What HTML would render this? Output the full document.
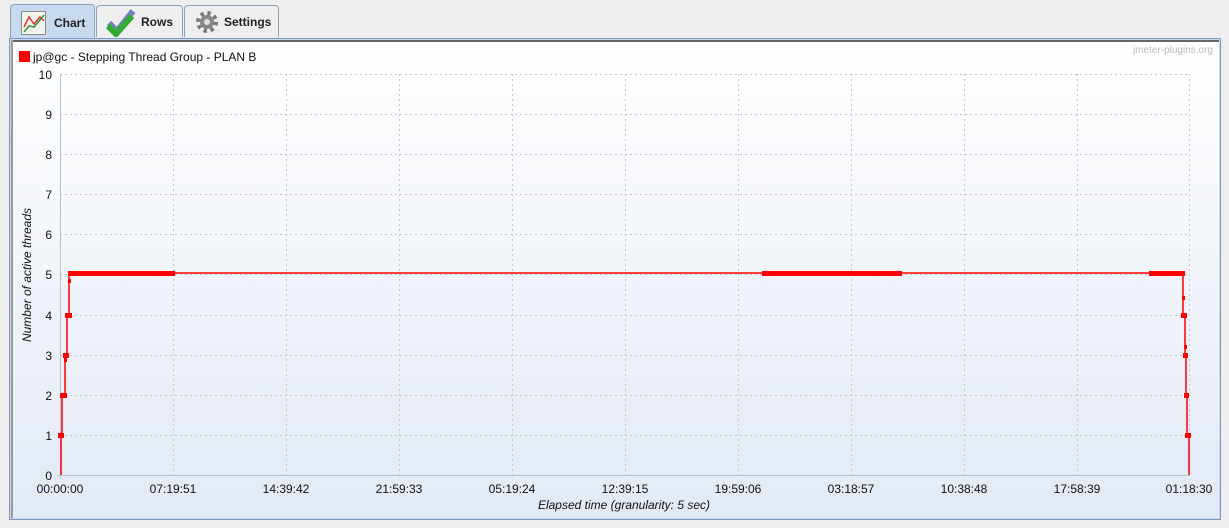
<!DOCTYPE html>
<html><head><style>
body{margin:0;width:1229px;height:528px;background:#eeeeee;font-family:"Liberation Sans",sans-serif;overflow:hidden;position:relative}
.tab{position:absolute;top:5px;height:32px;border:1px solid #8ea0bc;border-bottom:none;border-radius:4px 4px 0 0;background:#eeeeee;font-size:12px;font-weight:bold;color:#222;box-sizing:border-box}
.tab span{position:absolute;top:9px}
</style></head><body>
<div class="tab" style="left:10px;width:85px;top:4px;height:35px;background:#c8daf0"><span style="left:43px;top:11px">Chart</span>
<svg style="position:absolute;left:10px;top:6px" width="26" height="24"><rect x="0.5" y="0.5" width="24" height="23" fill="#f4f4ef" stroke="#888"/><polyline points="3,16 8,6 13,13 19,6 23,10" fill="none" stroke="#d33" stroke-width="1.5"/><polyline points="3,21 8,15 13,16 19,9 23,4" fill="none" stroke="#393" stroke-width="1.5"/></svg></div>
<div class="tab" style="left:96px;width:87px"><span style="left:44px">Rows</span>
<svg style="position:absolute;left:8px;top:1px" width="32" height="30"><path d="M4 16 L12 24 L28 4" fill="none" stroke="#7880c0" stroke-width="6"/><path d="M3 19 L11 27 L27 9" fill="none" stroke="#3a3" stroke-width="6"/></svg></div>
<div class="tab" style="left:184px;width:95px"><span style="left:39px">Settings</span>
<svg style="position:absolute;left:10px;top:4px" width="24" height="24"><circle cx="12" cy="12" r="8" fill="none" stroke="#777" stroke-width="6" stroke-dasharray="3 3.3"/><circle cx="12" cy="12" r="7" fill="#888"/><circle cx="12" cy="12" r="3" fill="#ddd"/></svg></div>
<div style="position:absolute;left:9px;top:38px;width:1212px;height:482px;border:1px solid #7c98c8;box-sizing:border-box;background:#ccd9ea"></div>
<svg style="position:absolute;left:11px;top:40px" width="1208" height="478">
<defs><linearGradient id="g" x1="0" y1="0" x2="0" y2="1"><stop offset="0" stop-color="#ffffff"/><stop offset="1" stop-color="#e3eaf5"/></linearGradient></defs>
<rect x="0" y="0" width="1208" height="478" fill="url(#g)"/>
<rect x="0" y="0" width="1208" height="2" fill="#666"/>
<rect x="0" y="0" width="2" height="478" fill="#999"/>
</svg>
<svg style="position:absolute;left:0;top:0" width="1229" height="528" font-family="Liberation Sans, sans-serif" font-size="12">
<text x="1213" y="53" text-anchor="end" font-size="10" fill="#bbb">jmeter-plugins.org</text>
<rect x="19" y="51" width="11" height="11" fill="#f00"/>
<text x="33" y="61" fill="#111">jp@gc - Stepping Thread Group - PLAN B</text>
<g stroke="#c4c8d0" stroke-dasharray="2 3" stroke-width="1">
<line x1="60" y1="74.5" x2="1190" y2="74.5"/><line x1="60" y1="114.5" x2="1190" y2="114.5"/><line x1="60" y1="154.5" x2="1190" y2="154.5"/><line x1="60" y1="194.5" x2="1190" y2="194.5"/><line x1="60" y1="234.5" x2="1190" y2="234.5"/><line x1="60" y1="274.5" x2="1190" y2="274.5"/><line x1="60" y1="315.5" x2="1190" y2="315.5"/><line x1="60" y1="355.5" x2="1190" y2="355.5"/><line x1="60" y1="395.5" x2="1190" y2="395.5"/><line x1="60" y1="435.5" x2="1190" y2="435.5"/>
<line x1="173.5" y1="74" x2="173.5" y2="475"/><line x1="286.5" y1="74" x2="286.5" y2="475"/><line x1="399.5" y1="74" x2="399.5" y2="475"/><line x1="512.5" y1="74" x2="512.5" y2="475"/><line x1="625.5" y1="74" x2="625.5" y2="475"/><line x1="738.5" y1="74" x2="738.5" y2="475"/><line x1="851.5" y1="74" x2="851.5" y2="475"/><line x1="964.5" y1="74" x2="964.5" y2="475"/><line x1="1077.5" y1="74" x2="1077.5" y2="475"/><line x1="1189.5" y1="74" x2="1189.5" y2="475"/>
</g>
<line x1="60.5" y1="74" x2="60.5" y2="478" stroke="#b8c0cc"/>
<line x1="57" y1="475.5" x2="1190" y2="475.5" stroke="#b8c0cc"/>
<g fill="#111" text-anchor="end">
<text x="52" y="79">10</text><text x="52" y="119">9</text><text x="52" y="159">8</text><text x="52" y="199">7</text><text x="52" y="239">6</text><text x="52" y="279">5</text><text x="52" y="320">4</text><text x="52" y="360">3</text><text x="52" y="400">2</text><text x="52" y="440">1</text><text x="52" y="480">0</text>
</g>
<g fill="#111" text-anchor="middle">
<text x="60" y="493">00:00:00</text><text x="173" y="493">07:19:51</text><text x="286" y="493">14:39:42</text><text x="399" y="493">21:59:33</text><text x="512" y="493">05:19:24</text><text x="625" y="493">12:39:15</text><text x="738" y="493">19:59:06</text><text x="851" y="493">03:18:57</text><text x="964" y="493">10:38:48</text><text x="1077" y="493">17:58:39</text><text x="1189" y="493">01:18:30</text>
<text x="624" y="509" font-style="italic">Elapsed time (granularity: 5 sec)</text>
<text transform="translate(31,275) rotate(-90)" font-style="italic">Number of active threads</text>
</g>
<g stroke="#f00" fill="none" stroke-width="1.5">
<polyline points="61,475 61,435 62,435 62,395 65,395 65,355 67,355 67,315 69,315 69,273 1183,273 1183,315 1185,315 1185,355 1186,355 1186,395 1187,395 1187,435 1189,435 1189,475"/>
</g>
<g fill="#f00">
<rect x="58" y="433" width="6" height="5"/><rect x="60" y="393" width="7" height="5"/><rect x="63" y="353" width="6" height="5"/><rect x="64" y="358" width="3" height="4"/><rect x="65" y="313" width="7" height="5"/><rect x="68" y="279" width="3" height="4"/>
<rect x="68" y="271" width="107" height="5"/><rect x="762" y="271" width="140" height="5"/><rect x="1149" y="271" width="36" height="5"/>
<rect x="1182" y="296" width="3" height="4"/><rect x="1181" y="313" width="6" height="5"/><rect x="1184" y="345" width="3" height="4"/><rect x="1183" y="353" width="5" height="5"/><rect x="1184" y="393" width="5" height="5"/><rect x="1185" y="433" width="6" height="5"/>
</g>
</svg>
</body></html>
